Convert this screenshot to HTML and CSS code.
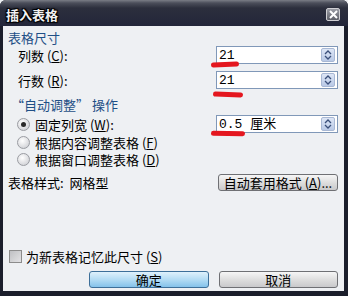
FILE: index.html
```html
<!DOCTYPE html>
<html lang="zh">
<head>
<meta charset="utf-8">
<link rel="stylesheet" href="styles.css">
</head>
<body>
<div class="window">
  <div class="titlebar">
    <span class="title">插入表格</span>
    <span class="close"><svg width="9" height="9" viewBox="0 0 9 9"><path d="M1 1L8 8M8 1L1 8" stroke="#fff" stroke-width="2"/></svg></span>
  </div>
  <div class="body">
    <div class="heading h1">表格尺寸</div>
    <div class="row r1">
      <span class="label">列数 (<u>C</u>):</span>
      <div class="spin"><span class="val">21</span><span class="spinbtn"><svg width="8" height="10" viewBox="0 0 8 10"><path d="M1 4L4 1L7 4M1 6L4 9L7 6" fill="none" stroke="#3a4f7a" stroke-width="1.3"/></svg></span></div>
    </div>
    <div class="row r2">
      <span class="label">行数 (<u>R</u>):</span>
      <div class="spin"><span class="val">21</span><span class="spinbtn"><svg width="8" height="10" viewBox="0 0 8 10"><path d="M1 4L4 1L7 4M1 6L4 9L7 6" fill="none" stroke="#3a4f7a" stroke-width="1.3"/></svg></span></div>
    </div>
    <div class="heading h2">“自动调整” 操作</div>
    <div class="row rr1">
      <span class="opt"><span class="radio on"></span>固定列宽 (<u>W</u>):</span>
      <div class="spin"><span class="val">0.5 厘米</span><span class="spinbtn"><svg width="8" height="10" viewBox="0 0 8 10"><path d="M1 4L4 1L7 4M1 6L4 9L7 6" fill="none" stroke="#3a4f7a" stroke-width="1.3"/></svg></span></div>
    </div>
    <div class="row rr2">
      <span class="opt"><span class="radio"></span>根据内容调整表格 (<u>F</u>)</span>
    </div>
    <div class="row rr3">
      <span class="opt"><span class="radio"></span>根据窗口调整表格 (<u>D</u>)</span>
    </div>
    <div class="row rs">
      <span class="style">表格样式:&nbsp; 网格型</span>
      <button class="btn auto">自动套用格式 (<u>A</u>)...</button>
    </div>
    <div class="row rc">
      <span class="check"></span><span>为新表格记忆此尺寸 (<u>S</u>)</span>
    </div>
    <div class="row rb">
      <button class="btn ok">确定</button>
      <button class="btn cancel">取消</button>
    </div>
  </div>
  <span class="mark m1"></span>
  <span class="mark m2"></span>
  <span class="mark m3"></span>
</div>
</body>
</html>
```

FILE: styles.css
```css
* { box-sizing: border-box; }
html, body { margin: 0; padding: 0; }
body {
  width: 348px;
  height: 296px;
  background: #eef0f3;
  font-family: "Noto Sans CJK SC", "DejaVu Sans", sans-serif;
  font-size: 13px;
  color: #000;
  overflow: hidden;
}
.window {
  position: relative;
  width: 348px;
  height: 296px;
  background: #1b1e2b;
  border-radius: 6px 6px 0 0;
  padding: 0 4px 5px 3px;
  display: flex;
  flex-direction: column;
}
.titlebar {
  height: 26px;
  margin: 0 -4px 0 -3px;
  border-radius: 6px 6px 0 0;
  background: linear-gradient(#7a7d86 0px, #4b4e5a 3px, #2c2f3d 8px, #23263a 26px);
  display: flex;
  align-items: center;
  justify-content: space-between;
  padding: 0 8px 0 6px;
}
.title {
  color: #f2f2f2;
  font-weight: bold;
  font-size: 13px;
  text-shadow: 0 0 1px #000, 1px 1px 1px #000, -1px -1px 1px #000, 1px -1px 1px #000, -1px 1px 1px #000;
  margin-top: 2px;
}
.close {
  width: 14px;
  height: 13px;
  border: 1px solid #d0d0d4;
  border-radius: 2px;
  background: linear-gradient(#9a9ca4, #5e6069);
  display: flex;
  align-items: center;
  justify-content: center;
  margin-top: 2px;
}
.body {
  flex: 1;
  background: #eef0f3;
  display: flex;
  flex-direction: column;
}
.heading {
  color: #1f4f86;
  font-size: 13px;
  line-height: 15px;
  height: 15px;
}
.h1 { margin-top: 4px; padding-left: 5px; }
.h2 { margin-top: 8px; padding-left: 8px; }
.row {
  display: flex;
  align-items: center;
  justify-content: space-between;
  padding-right: 6px;
  line-height: 15px;
}
.r1 { margin-top: 1px; height: 18px; padding-left: 15px; }
.r2 { margin-top: 7px; height: 18px; padding-left: 15px; }
.rr1 { margin-top: 3px; height: 18px; padding-left: 14px; }
.rr2 { height: 18px; padding-left: 14px; }
.rr3 { height: 17px; padding-left: 14px; }
.rs { margin-top: 6px; height: 17px; padding-left: 5px; }
.rc { margin-top: 58px; height: 15px; padding-left: 6px; justify-content: flex-start; }
.rb { margin-top: 6px; height: 18px; padding-left: 86px; gap: 10px; }
.spin {
  width: 122px;
  height: 18px;
  border: 1px solid #8098b8;
  background: #fff;
  display: flex;
  align-items: center;
  justify-content: space-between;
  padding: 0 2px 0 2px;
}
.val { font-family: "Liberation Mono", "Noto Sans CJK SC", monospace; font-size: 13px; }
.spinbtn {
  width: 14px;
  height: 14px;
  border: 1px solid #a8b8d4;
  border-radius: 2px;
  background: linear-gradient(#dde6f6, #b9c9e6);
  display: flex;
  align-items: center;
  justify-content: center;
}
.opt { display: flex; align-items: center; }
.radio {
  width: 13px;
  height: 13px;
  border-radius: 50%;
  border: 1px solid #9a9ca2;
  background: radial-gradient(circle at 40% 35%, #ffffff, #d7d8dc 70%, #c3c5ca);
  margin-right: 5px;
  position: relative;
}
.radio.on::after {
  content: "";
  position: absolute;
  left: 3px;
  top: 3px;
  width: 5px;
  height: 5px;
  border-radius: 50%;
  background: #2a2a2a;
}
.btn {
  font-family: inherit;
  font-size: 13px;
  height: 17px;
  line-height: 13px;
  padding: 0;
  border-radius: 3px;
  color: #000;
}
.auto, .cancel {
  width: 120px;
  border: 1px solid #6f7074;
  background: linear-gradient(#f6f6f6, #dcdcdc 55%, #c9c9cb);
}
.ok {
  width: 120px;
  border: 1px solid #3d6f99;
  background: linear-gradient(#dff1fc, #b4dcf4 50%, #84c2ea);
}
.check {
  width: 13px;
  height: 13px;
  border: 1px solid #8c8c8c;
  background: linear-gradient(135deg, #bfc0c3, #e3e3e5);
  margin-right: 4px;
}
u { text-decoration: underline; }
.mark {
  position: absolute;
  height: 5px;
  border-radius: 3px;
  background: #e4171f;
}
.m1 { left: 211px; top: 62px; width: 28px; transform: rotate(-3deg); }
.m2 { left: 213px; top: 92px; width: 30px; transform: rotate(2deg); }
.m3 { left: 211px; top: 131px; width: 34px; transform: rotate(1deg); }
```
